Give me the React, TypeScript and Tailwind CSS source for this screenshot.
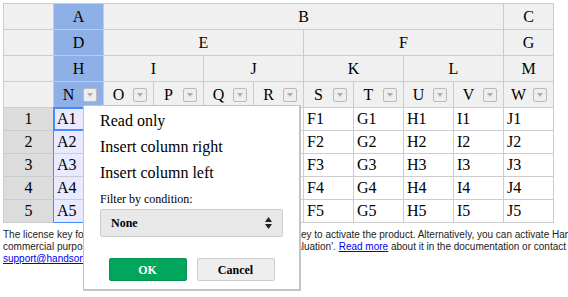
import React from 'react';

type Head = { label: string; span: number; active?: boolean; menu?: boolean };

const SPAN: Record<number, string> = {
  1: 'col-span-1',
  2: 'col-span-2',
  4: 'col-span-4',
  8: 'col-span-8',
};

const HEADER_ROWS: Head[][] = [
  [
    { label: 'A', span: 1, active: true },
    { label: 'B', span: 8 },
    { label: 'C', span: 1 },
  ],
  [
    { label: 'D', span: 1, active: true },
    { label: 'E', span: 4 },
    { label: 'F', span: 4 },
    { label: 'G', span: 1 },
  ],
  [
    { label: 'H', span: 1, active: true },
    { label: 'I', span: 2 },
    { label: 'J', span: 2 },
    { label: 'K', span: 2 },
    { label: 'L', span: 2 },
    { label: 'M', span: 1 },
  ],
  ['N', 'O', 'P', 'Q', 'R', 'S', 'T', 'U', 'V', 'W'].map((l, i) => ({
    label: l,
    span: 1,
    active: i === 0,
    menu: true,
  })),
];

const COLS = ['A', 'B', 'C', 'D', 'E', 'F', 'G', 'H', 'I', 'J'];
const ROWS = [1, 2, 3, 4, 5];

function DropButton() {
  return (
    <span className="mr-[6px] flex h-[14px] w-[14px] items-center justify-center rounded-[2px] border border-[#bbb] bg-[#eee]">
      <svg width="6" height="4" viewBox="0 0 6 4">
        <polygon points="0,0 6,0 3,4" fill="#b0b0b0" />
      </svg>
    </span>
  );
}

function HeaderCell({ h }: { h: Head }) {
  return (
    <div
      className={`${SPAN[h.span]} flex h-[26px] items-center border-r border-b border-[#ccc] ${
        h.active ? 'bg-[#8eb0e7]' : 'bg-[#f0f0f0]'
      }`}
    >
      <span className="flex-1 text-center">{h.label}</span>
      {h.menu && <DropButton />}
    </div>
  );
}

function ColumnMenu() {
  return (
    <div className="absolute left-[83px] top-[105px] w-[218px] border-l border-t border-r-2 border-b-2 border-[#c4c4c4] bg-white pb-[8px] pt-[2px]">
      <div className="text-[16px]">
        {['Read only', 'Insert column right', 'Insert column left'].map((t) => (
          <div key={t} className="flex h-[26px] items-center pl-[16px]">
            {t}
          </div>
        ))}
      </div>
      <div className="mt-[5px] pl-[16px] text-[12px] leading-[16px]">Filter by condition:</div>
      <div className="mx-[16px] mt-[2px] flex h-[28px] items-center justify-between rounded-[2px] border border-[#ccc] bg-[#e8e8e8] pl-[10px] pr-[10px]">
        <span className="text-[12px] font-bold">None</span>
        <svg width="7" height="12" viewBox="0 0 7 12">
          <polygon points="0,5 3.5,0 7,5" fill="#222" />
          <polygon points="0,7 7,7 3.5,12" fill="#222" />
        </svg>
      </div>
      <div className="mt-[21px] flex justify-center gap-[10px]">
        <button className="h-[23px] w-[78px] rounded-[2px] border border-[#049450] bg-[#00a65b] text-[12px] font-bold text-white">
          OK
        </button>
        <button className="h-[23px] w-[78px] rounded-[2px] border border-[#ccc] bg-[#eee] text-[12px] font-bold text-black">
          Cancel
        </button>
      </div>
    </div>
  );
}

export default function App() {
  return (
    <div className="relative h-[297px] w-[568px] overflow-hidden bg-white pl-[3px] pt-[3px] font-['Liberation_Serif',serif] text-[16px] text-black">
      <div className="grid w-max grid-cols-[repeat(11,50px)] border-l border-t border-[#ccc]">
        {HEADER_ROWS.map((row, ri) => (
          <React.Fragment key={ri}>
            <div className="h-[26px] border-r border-b border-[#ccc] bg-[#f0f0f0]" />
            {row.map((h) => (
              <HeaderCell key={h.label} h={h} />
            ))}
          </React.Fragment>
        ))}
        {ROWS.map((r) => (
          <React.Fragment key={r}>
            <div className="flex h-[23px] items-center justify-center border-r border-b border-[#ccc] border-r-[#4b89ff] bg-[#dcdcdc]">
              {r}
            </div>
            {COLS.map((c, ci) => (
              <div
                key={c}
                className={`relative flex h-[23px] items-center border-r border-b border-[#ccc] px-[3px] ${
                  ci === 0 ? 'border-r-[#4b89ff] bg-[#e9eaff]' : 'bg-white'
                } ${ci === 0 && r === 5 ? 'border-b-[#4b89ff]' : ''}`}
              >
                {c}
                {r}
                {ci === 0 && r === 1 && (
                  <div className="absolute -left-px -top-px h-[24px] w-[51px] border-2 border-[#4b89ff]" />
                )}
              </div>
            ))}
          </React.Fragment>
        ))}
      </div>

      <div className="mt-[6px] whitespace-nowrap font-['Liberation_Sans',Arial,sans-serif] text-[10px] leading-[12px] text-[#222]">
        <div>
          The license key for Handsontable is missing. Use your purchased key to activate the product. Alternatively, you can
          activate Handsontable to use for non-
        </div>
        <div>
          commercial purposes by passing the key: 'non-commercial-and-evaluation'.{' '}
          <a href="#" className="text-[#0000ee] underline">
            Read more
          </a>{' '}
          about it in the documentation or contact us at
        </div>
        <div>
          <a href="#" className="text-[#0000ee] underline">
            support@handsontable.com
          </a>
          .
        </div>
      </div>

      <ColumnMenu />
    </div>
  );
}
